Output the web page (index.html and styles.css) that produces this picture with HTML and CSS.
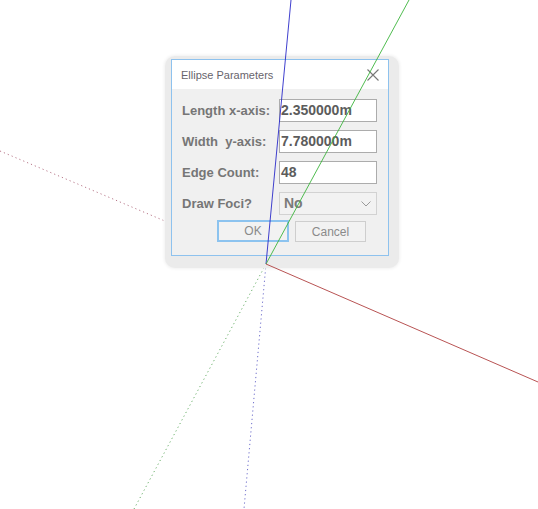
FILE: index.html
```html
<!DOCTYPE html>
<html lang="en">
<head>
    <meta charset="UTF-8">
    <title>Ellipse Parameters</title>
    <link rel="stylesheet" href="styles.css">
</head>
<body>
<div id="scene">
    <svg class="axes axes-back" width="538" height="509" viewBox="0 0 538 509">
        <line x1="0" y1="151" x2="266" y2="264" stroke="#b8788a" stroke-dasharray="1.2 3" />
        <line x1="266" y1="264" x2="134" y2="509" stroke="#6ab06a" stroke-dasharray="1.2 3" />
        <line x1="266" y1="264" x2="244" y2="509" stroke="#6e6ecc" stroke-dasharray="1.2 3" />
    </svg>

    <div class="win">
        <div class="dialog">
            <div class="titlebar">
                <span class="title">Ellipse Parameters</span>
                <svg class="close" width="12" height="12" viewBox="0 0 12 12">
                    <path d="M0.5 0.5 L11.5 11.5 M11.5 0.5 L0.5 11.5" stroke="#777" stroke-width="1.1" fill="none" />
                </svg>
            </div>
            <div class="body">
                <div class="form">
                    <label>Length x-axis:</label>
                    <div class="field">2.350000m</div>
                    <label>Width&nbsp; y-axis:</label>
                    <div class="field">7.780000m</div>
                    <label>Edge Count:</label>
                    <div class="field">48</div>
                    <label>Draw Foci?</label>
                    <div class="field select">
                        <span>No</span>
                        <svg width="10" height="6" viewBox="0 0 10 6">
                            <path d="M0.5 0.5 L5 5 L9.5 0.5" stroke="#9a9a9a" fill="none" />
                        </svg>
                    </div>
                </div>
                <div class="buttons">
                    <button class="btn btn-default">OK</button>
                    <button class="btn">Cancel</button>
                </div>
            </div>
        </div>
    </div>

    <svg class="axes axes-front" width="538" height="509" viewBox="0 0 538 509">
        <line x1="291" y1="0" x2="266" y2="264" stroke="#2a2ac8" stroke-width="0.9" />
        <line x1="409" y1="0" x2="266" y2="264" stroke="#3cb43c" stroke-width="0.9" />
        <line x1="266" y1="264" x2="538" y2="382" stroke="#b04040" stroke-width="0.9" />
    </svg>
</div>
</body>
</html>
```

FILE: styles.css
```css
html, body {
    margin: 0;
    background: #fff;
}
#scene {
    position: relative;
    width: 538px;
    height: 509px;
    overflow: hidden;
    font-family: "Liberation Sans", Arial, sans-serif;
}
.axes {
    position: absolute;
    left: 0;
    top: 0;
}
.axes-front {
    pointer-events: none;
}
.win {
    position: absolute;
    left: 165px;
    top: 56px;
    padding: 3px 10px 12px 6px;
    border-radius: 10px;
    background: #ebebeb;
    box-shadow: 0 0 3px 1px #f1f1f1;
}
.dialog {
    width: 216px;
    height: 195px;
    border: 1px solid #8ec2ee;
    background: #f0f0f0;
    display: flex;
    flex-direction: column;
}
.titlebar {
    height: 29px;
    background: #fff;
    display: flex;
    align-items: center;
    justify-content: space-between;
    padding: 0 9px 0 9px;
}
.title {
    font-size: 11px;
    color: #68646c;
    margin-top: 1px;
}
.close {
    display: block;
    margin-top: 1px;
}
.body {
    padding: 10px 11px 0 10px;
}
.form {
    display: grid;
    grid-template-columns: 97px 98px;
    grid-auto-rows: 23px;
    row-gap: 8px;
    align-items: center;
}
.form label {
    font-size: 13px;
    font-weight: bold;
    color: #767676;
}
.field {
    box-sizing: border-box;
    height: 23px;
    border: 1px solid #acacac;
    background: #fff;
    padding: 0 0 0 1px;
    font-size: 14px;
    font-weight: bold;
    color: #5c5c5c;
    line-height: 20px;
}
.select {
    border-color: #d2d2d2;
    background: #f2f2f2;
    color: #7a7a7a;
    padding: 0 5px 0 4px;
    display: flex;
    align-items: center;
    justify-content: space-between;
    line-height: 21px;
}
.select svg {
    display: block;
    margin-top: 1px;
}
.buttons {
    display: flex;
    gap: 6px;
    padding: 6px 0 0 35px;
}
.btn {
    box-sizing: border-box;
    width: 71px;
    height: 21px;
    margin: 0;
    padding: 0;
    border: 1px solid #cecece;
    background: #f2f2f2;
    font-family: "Liberation Sans", Arial, sans-serif;
    font-size: 12px;
    color: #8a8a8a;
}
.btn-default {
    width: 72px;
    height: 22px;
    border: 2px solid #8cc3ef;
    margin-top: -1px;
}
```
